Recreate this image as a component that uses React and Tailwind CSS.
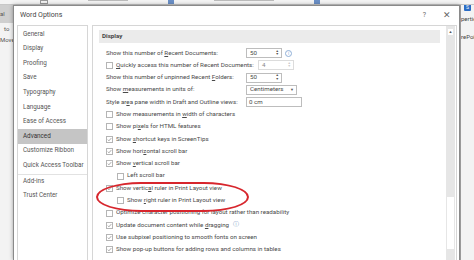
import React from 'react'

const navItems = [
  'General', 'Display', 'Proofing', 'Save', 'Typography', 'Language',
  'Ease of Access', 'Advanced', 'Customize Ribbon', 'Quick Access Toolbar',
  'Add-ins', 'Trust Center',
]

const Check = ({ checked }) => (
  <span className='w-[7px] h-[7px] border border-[#b5b5b5] bg-white flex items-center justify-center shrink-0'>
    {checked && (
      <svg viewBox='0 0 8 8' className='w-[7px] h-[7px]'>
        <path d='M1.3 4.2 L3.1 6 L6.8 1.8' fill='none' stroke='#606060' strokeWidth='0.9' />
      </svg>
    )}
  </span>
)

const CheckRow = ({ label, checked, indent, info }) => (
  <div className={`h-[12.3px] flex items-center gap-[3px] whitespace-nowrap ${indent ? 'pl-[11px]' : ''}`}>
    <Check checked={checked} />
    <span>{label}</span>
    {info && <span className='text-[6px] text-[#7a9cc6] ml-[1px] -mt-[3px]'>ⓘ</span>}
  </div>
)

const Spin = ({ value, disabled }) => (
  <div className={`w-[36px] h-[10px] border flex items-center justify-between pl-[3px] pr-[2px] bg-white ${disabled ? 'border-[#dcdcdc] text-[#888]' : 'border-[#bdbdbd]'}`}>
    <span>{value}</span>
    <span className={`flex flex-col leading-none text-[3.5px] ${disabled ? 'text-[#ccc]' : 'text-[#555]'}`}>
      <span>▲</span>
      <span>▼</span>
    </span>
  </div>
)

const FieldRow = ({ label, children, indent }) => (
  <div className='h-[12.3px] flex items-center whitespace-nowrap'>
    <span className={`${indent ? 'w-[152px]' : 'w-[140px]'} shrink-0 flex items-center gap-[3px]`}>{label}</span>
    {children}
  </div>
)

export default function App() {
  return (
    <div className='w-[474px] h-[260px] overflow-hidden bg-[#e9e9e9] flex flex-col' style={{ fontFamily: 'Roboto, "Open Sans", sans-serif' }}>
      {/* ribbon strip behind dialog */}
      <div className='h-[5px] shrink-0 bg-[#f4f4f4] border-b border-[#c8c8c8] flex items-end gap-[40px] pl-[40px]'>
        <span className='w-[8px] h-[4px] border border-[#999]'></span>
        <span className='w-[40px] h-[4px] border-t border-[#bbb]'></span>
        <span className='w-[6px] h-[4px] bg-[#6a8fc6]'></span>
        <span className='w-[60px] h-[4px] border-t border-[#bbb]'></span>
        <span className='w-[6px] h-[4px] bg-[#6a8fc6]'></span>
      </div>
      <div className='flex flex-1 min-h-0'>
        {/* left of word window */}
        <div className='w-[13px] shrink-0 bg-[#f3f3f3] flex flex-col text-[6px] text-[#555] leading-none overflow-hidden'>
          <div className='h-[18px] bg-[#cfcfcf] flex items-center'>al</div>
          <div className='mt-[3px] pl-[4px]'>to</div>
          <div className='mt-[5px]'>Move</div>
        </div>

        {/* dialog */}
        <div className='w-[447px] shrink-0 bg-white border-l border-r border-t border-[#8a8a8a] flex flex-col text-[6.2px] text-[#4a4a4a] shadow-[0_0_4px_rgba(0,0,0,0.35)]'>
          <div className='h-[19px] shrink-0 flex items-center justify-between pl-[6px] pr-[8px]'>
            <span className='text-[7px] text-[#444]'>Word Options</span>
            <div className='flex items-center gap-[17px] text-[#666]'>
              <span className='text-[7px]'>?</span>
              <span className='text-[9px] font-light leading-none'>✕</span>
            </div>
          </div>
          <div className='flex flex-1 min-h-0 pl-[3px] gap-[4px]'>
            <div className='w-[71px] shrink-0 border border-[#d6d6d6] border-b-0 pt-[1px] text-[6.3px] text-[#555] whitespace-nowrap'>
              {navItems.map((item) => (
                <div key={item} className={`h-[14.6px] flex items-center pl-[5px] ${item === 'Advanced' ? 'bg-[#c5c5c5] text-[#333]' : ''} ${item === 'Add-ins' ? 'border-t border-[#e2e2e2] mt-[1px]' : ''}`}>
                  {item}
                </div>
              ))}
            </div>

            <div className='relative w-[365px] shrink-0 border border-[#d6d6d6] border-b-0 flex'>
              <div className='flex-1 pl-[6px] pr-[6px] pt-[4px]'>
                <div className='h-[13px] bg-[#ebebeb] flex items-center pl-[3px] font-bold text-[#444] text-[6.2px]'>Display</div>
                <div className='pl-[7px] pt-[4px]'>
                  <FieldRow label={<span>Show this number of <u>R</u>ecent Documents:</span>}>
                    <Spin value='50' />
                    <span className='ml-[3px] w-[7px] h-[7px] rounded-full border border-[#8fb0d8] text-[#8fb0d8] text-[5px] flex items-center justify-center leading-none'>i</span>
                  </FieldRow>
                  <FieldRow indent label={<><Check /><span><u>Q</u>uickly access this number of Recent Documents:</span></>}>
                    <Spin value='4' disabled />
                  </FieldRow>
                  <FieldRow label={<span>Show this number of unpinned Recent <u>F</u>olders:</span>}>
                    <Spin value='50' />
                  </FieldRow>
                  <FieldRow label={<span>Show <u>m</u>easurements in units of:</span>}>
                    <div className='w-[51px] h-[10px] border border-[#bdbdbd] flex items-center justify-between pl-[3px] pr-[2px]'>
                      <span>Centimeters</span>
                      <span className='text-[4px] text-[#555]'>▼</span>
                    </div>
                  </FieldRow>
                  <FieldRow label={<span>Style ar<u>e</u>a pane width in Draft and Outline views:</span>}>
                    <div className='w-[56px] h-[10px] border border-[#bdbdbd] flex items-center pl-[2px]'>0 cm</div>
                  </FieldRow>
                  <CheckRow label={<>Show measurements in <u>w</u>idth of characters</>} />
                  <CheckRow label={<>Show pi<u>x</u>els for HTML features</>} />
                  <CheckRow checked label={<>Show <u>s</u>hortcut keys in ScreenTips</>} />
                  <CheckRow checked label={<>Show hori<u>z</u>ontal scroll bar</>} />
                  <CheckRow checked label={<>Show <u>v</u>ertical scroll bar</>} />
                  <CheckRow indent label='Left scroll bar' />
                  <CheckRow checked label={<>Show vertic<u>a</u>l ruler in Print Layout view</>} />
                  <CheckRow indent label={<>Show <u>r</u>ight ruler in Print Layout view</>} />
                  <CheckRow label='Optimize character positioning for layout rather than readability' />
                  <CheckRow checked info label={<>Update document content while <u>d</u>ragging</>} />
                  <CheckRow checked label='Use subpixel positioning to smooth fonts on screen' />
                  <CheckRow checked label='Show pop-up buttons for adding rows and columns in tables' />
                </div>
              </div>
              {/* scrollbar */}
              <div className='w-[9px] shrink-0 bg-[#e6e6e6] flex flex-col items-center mr-[1px]'>
                <span className='mt-[3px] text-[4px] text-[#555] bg-white px-[1px] leading-[6px]'>▲</span>
                <div className='mt-[162px] w-[7px] h-[52px] bg-white'></div>
              </div>
              {/* red highlight ellipse */}
              <div className='absolute left-[3px] top-[156px] w-[153px] h-[30px] rounded-[45px/15px] border-2 border-[#d7262d]'></div>
            </div>
          </div>
        </div>

        {/* right of word window */}
        <div className='flex-1 bg-[#f3f3f3] border-l border-[#9a9a9a] text-[6px] text-[#444] leading-none flex flex-col overflow-hidden'>
          <span className='mt-[-2px] ml-[3px] w-[7px] h-[8px] bg-[#2b6cc4] rounded-[1px] text-white text-[5px] flex items-center justify-center'>S</span>
          <span className='mt-[5px]'>pertie</span>
          <span className='mt-[12px]'>rePoin</span>
        </div>
      </div>
    </div>
  )
}
